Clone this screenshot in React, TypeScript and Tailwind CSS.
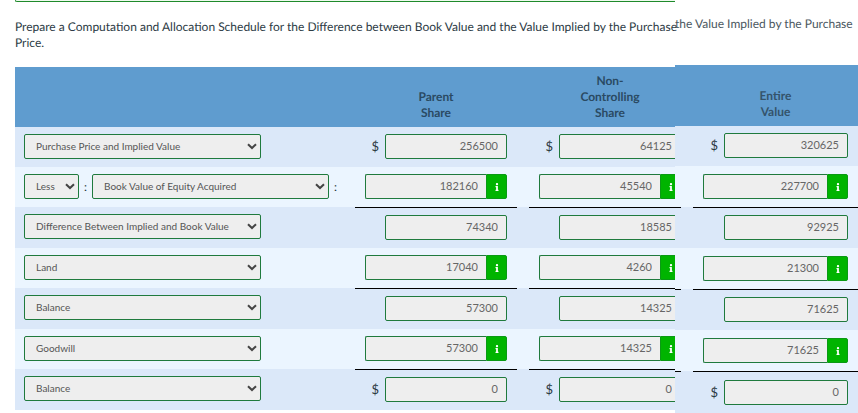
import React from 'react';
import { FaInfo } from 'react-icons/fa';

type Row = {
  account: string;
  less?: boolean;
  dollar?: boolean;
  info?: boolean;
  total?: boolean;
  parent: string;
  nonControlling: string;
  entire: string;
};

const rows: Row[] = [
  { account: 'Purchase Price and Implied Value', dollar: true, parent: '256500', nonControlling: '64125', entire: '320625' },
  { account: 'Book Value of Equity Acquired', less: true, info: true, parent: '182160', nonControlling: '45540', entire: '227700' },
  { account: 'Difference Between Implied and Book Value', total: true, parent: '74340', nonControlling: '18585', entire: '92925' },
  { account: 'Land', info: true, parent: '17040', nonControlling: '4260', entire: '21300' },
  { account: 'Balance', total: true, parent: '57300', nonControlling: '14325', entire: '71625' },
  { account: 'Goodwill', info: true, parent: '57300', nonControlling: '14325', entire: '71625' },
  { account: 'Balance', total: true, dollar: true, parent: '0', nonControlling: '0', entire: '0' },
];

const stripe = (index: number) => (index % 2 === 0 ? 'bg-[#dbe8f9]' : 'bg-[#ebf5ff]');
const rule = (row: Row) => (row.total ? 'border-t border-black' : '');

const SelectBox = ({ value, label, width }: { value: string; label: string; width: string }) => (
  <div className={`relative h-[25px] ${width}`}>
    <select
      disabled
      aria-label={label}
      defaultValue={value}
      className="h-full w-full appearance-none rounded-[2px] border border-[#1f7a3d] bg-[#eeeeee] pb-[2px] pl-[11px] text-[10px] text-[#555555] disabled:opacity-100"
    >
      <option>{value}</option>
    </select>
    <svg className="pointer-events-none absolute top-[9px] right-1 h-[7px] w-[10px]" viewBox="0 0 10 7" fill="none">
      <path d="M1 1.2 L5 5 L9 1.2" stroke="#444444" strokeWidth="2" />
    </svg>
  </div>
);

const Amount = ({ row, value, label, wide }: { row: Row; value: string; label: string; wide?: boolean }) => {
  const width = wide
    ? row.info ? 'w-[145px]' : 'w-[124px]'
    : row.info ? 'w-[142px]' : 'w-[122px]';

  return (
    <div className="flex items-center justify-end gap-[6px] pr-[10px]">
      {row.dollar && <span className="pb-[2px] text-[13px] leading-4">$</span>}
      <div className={`flex h-[25px] ${width}`}>
        <input
          type="text"
          disabled
          aria-label={label}
          defaultValue={value}
          className={`h-full min-w-0 flex-1 border border-[#1f7a3d] bg-[#eeeeee] pr-2 pb-[2px] text-right text-[11px] text-[#666666] ${
            row.info ? 'rounded-l-[2px] border-r-0' : 'rounded-[2px]'
          }`}
        />
        {row.info && (
          <button
            type="button"
            aria-label="More information"
            className="flex h-full w-[21px] items-center justify-center rounded-r-[2px] border border-[#0a9a14] bg-[#00b400] text-white"
          >
            <FaInfo className="h-2 w-2" />
          </button>
        )}
      </div>
    </div>
  );
};

const App: React.FC = () => {
  return (
    <div className="flex items-start bg-white font-['Lato',sans-serif] text-[#2d3b45] [text-rendering:geometricPrecision]">
      {/* Schedule with the account and share columns */}
      <section className="min-w-0 flex-1 pl-[15px]">
        <div className="h-[2px] rounded-bl-[3px] border-b border-l border-[#1f8a2b] bg-[#effbef]" />
        <p className="mt-[17px] -mr-1 text-[12px] leading-4">
          Prepare a Computation and Allocation Schedule for the Difference between Book Value and the Value Implied by the Purchase Price.
        </p>
        <div className="mt-4 overflow-hidden">
          <table className="w-[calc(100%+16px)] table-fixed border-separate border-spacing-0">
            <thead>
              <tr className="h-[60px] bg-[#5f9ccf] align-bottom text-[12px] leading-4 text-[#2a4a63]">
                <th aria-label="Account" />
                <th className="w-[162px] pb-[6px] font-bold">Parent<br />Share</th>
                <td className="w-3" />
                <th className="w-[162px] pb-[6px] font-bold">Non-<br />Controlling<br />Share</th>
              </tr>
            </thead>
            <tbody>
              {rows.map((row, index) => (
                <tr key={index} className={`align-top ${stripe(index)}`}>
                  <td className="pt-[7px] pb-2 pl-[9px]">
                    <div className="flex items-center gap-[5px] text-[12px] leading-4">
                      {row.less && (
                        <>
                          <SelectBox value="Less" label="Operation" width="w-[55px]" />
                          <span>:</span>
                        </>
                      )}
                      <SelectBox value={row.account} label={`Account ${index + 1}`} width="w-[237px]" />
                      {row.less && <span>:</span>}
                    </div>
                  </td>
                  <td className={`pt-[7px] pb-2 ${rule(row)}`}>
                    <Amount row={row} value={row.parent} label={`${row.account}, parent share`} />
                  </td>
                  <td />
                  <td className={`pt-[7px] pb-2 ${rule(row)}`}>
                    <Amount row={row} value={row.nonControlling} label={`${row.account}, non-controlling share`} />
                  </td>
                </tr>
              ))}
            </tbody>
          </table>
        </div>
      </section>

      {/* Entire value column */}
      <section className="w-[183px] shrink-0 overflow-hidden">
        <p className="mt-4 text-[12px] leading-4 whitespace-nowrap text-[#4c5861]">the Value Implied by the Purchase</p>
        <table className="mt-[33px] w-full table-fixed border-separate border-spacing-0">
          <thead>
            <tr className="h-[61px] bg-[#5f9ccf] align-bottom text-[12px] leading-4 text-[#34536b]">
              <td className="w-[6px]" />
              <td className="w-3" />
              <th className="pb-[6px] font-bold">Entire<br />Value</th>
            </tr>
          </thead>
          <tbody>
            {rows.map((row, index) => (
              <tr key={index} className={`align-top ${stripe(index)}`}>
                <td className={rule(row)} />
                <td />
                <td className={`pb-2 ${row.info || index === rows.length - 1 ? 'pt-2' : 'pt-[7px]'} ${rule(row)}`}>
                  <Amount wide row={row} value={row.entire} label={`${row.account}, entire value`} />
                </td>
              </tr>
            ))}
          </tbody>
        </table>
      </section>
    </div>
  );
};

export default App;
